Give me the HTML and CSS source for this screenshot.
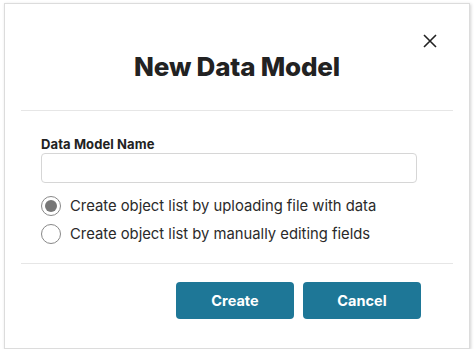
FILE: index.html
```html
<!DOCTYPE html>
<html>
<head>
<meta charset="utf-8">
<link rel="stylesheet" href="styles.css">
</head>
<body>
<div class="dialog">
  <div class="header">
    <button class="close" aria-label="Close">
      <svg width="14" height="14" viewBox="0 0 14 14"><path d="M1 1L13 13M13 1L1 13" stroke="#222" stroke-width="1.6" fill="none"/></svg>
    </button>
    <h1 class="title">New Data Model</h1>
  </div>
  <div class="body">
    <label class="label">Data Model Name</label>
    <input class="input" type="text">
    <div class="options">
      <label class="option"><span class="radio checked"></span><span>Create object list by uploading file with data</span></label>
      <label class="option"><span class="radio"></span><span>Create object list by manually editing fields</span></label>
    </div>
  </div>
  <div class="footer">
    <button class="btn">Create</button>
    <button class="btn">Cancel</button>
  </div>
</div>
</body>
</html>
```
FILE: styles.css
```css
* { box-sizing: border-box; }
html, body { margin: 0; padding: 0; background: #fff; }
body {
  font-family: Inter, "Noto Sans", sans-serif;
  color: #222;
  padding: 3px 0 0 4px;
}
.dialog {
  width: 466px;
  height: 346px;
  background: #fff;
  border: 1px solid #dcdcdc;
  box-shadow: 1px 1px 3px rgba(0,0,0,0.18);
  padding: 0 16px;
  display: flex;
  flex-direction: column;
}
.header {
  position: relative;
  height: 107px;
  border-bottom: 1px solid #e6e6e6;
  display: flex;
  justify-content: center;
}
.close {
  position: absolute;
  right: 16px;
  top: 30px;
  border: 0;
  background: none;
  padding: 0;
  width: 14px;
  height: 14px;
  cursor: pointer;
}
.close svg { display: block; }
.title {
  margin: 46px 0 0;
  font-size: 26px;
  font-weight: 800;
  letter-spacing: -0.2px;
  line-height: 34px;
  color: #222;
}
.body {
  padding: 25px 20px 0 20px;
  border-bottom: 1px solid #e6e6e6;
  height: 153px;
  display: flex;
  flex-direction: column;
}
.label {
  font-size: 13px;
  font-weight: 700;
  line-height: 16px;
  color: #222;
  letter-spacing: 0.1px;
}
.input {
  margin-top: 1px;
  width: 376px;
  height: 30px;
  border: 1px solid #d6d6d6;
  border-radius: 4px;
  background: #fff;
}
.options {
  margin-top: 13px;
  display: flex;
  flex-direction: column;
  gap: 8px;
}
.option {
  display: flex;
  align-items: center;
  gap: 9px;
  font-size: 14.8px;
  line-height: 20px;
  color: #2a2a2a;
}
.radio {
  width: 20px;
  height: 20px;
  border-radius: 50%;
  border: 1px solid #888;
  background: #fff;
  position: relative;
  flex: none;
}
.radio.checked::after {
  content: "";
  position: absolute;
  left: 3px;
  top: 3px;
  width: 12px;
  height: 12px;
  border-radius: 50%;
  background: #777;
}
.footer {
  display: flex;
  justify-content: flex-end;
  gap: 9px;
  padding: 18px 32px 0 0;
}
.btn {
  width: 118px;
  height: 37px;
  border: 0;
  border-radius: 4px;
  background: #1e7797;
  color: #fff;
  font-family: Inter, "Noto Sans", sans-serif;
  font-size: 14.5px;
  font-weight: 700;
}
```
